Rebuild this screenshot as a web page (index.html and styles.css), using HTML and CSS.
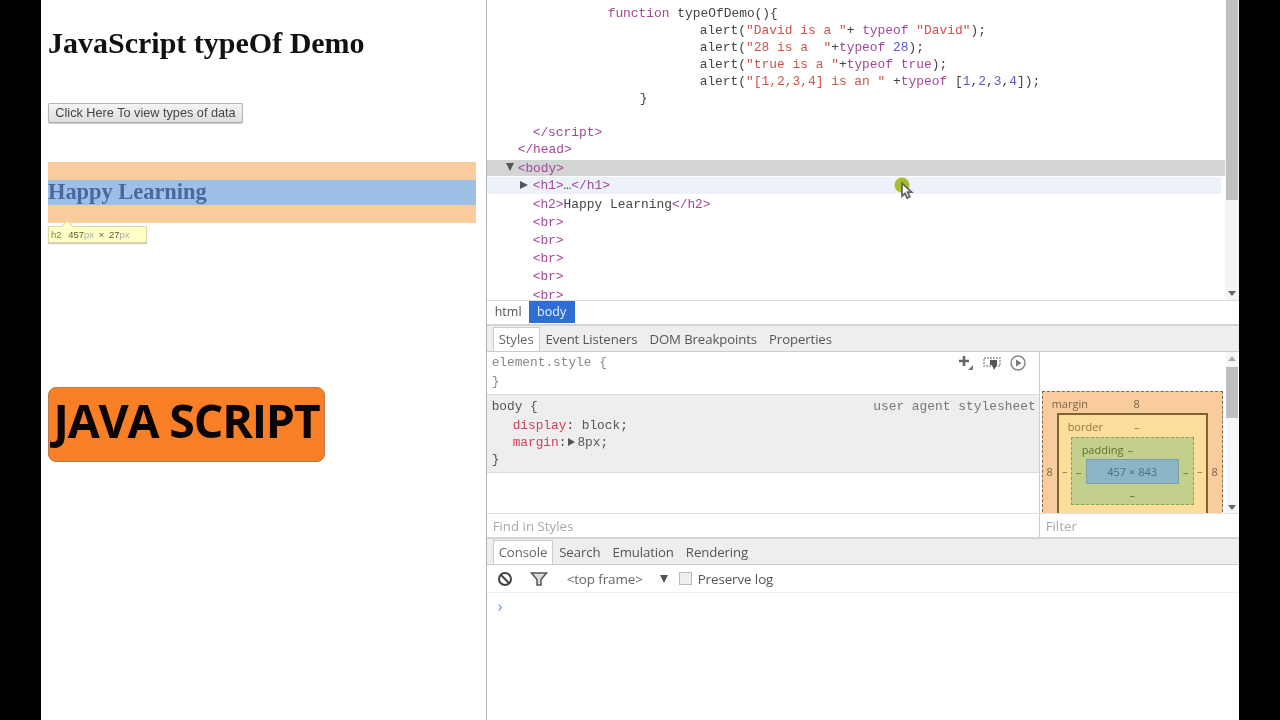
FILE: index.html
```html
<!DOCTYPE html>
<html lang="en">
<head>
    <meta charset="UTF-8" />
    <title>JavaScript typeOf Demo</title>
    <link rel="stylesheet" href="styles.css">
</head>
<body>
<div class="frame">
    <!-- page being inspected -->
    <div class="page">
        <h1>JavaScript typeOf Demo</h1>
        <button class="demo-btn">Click Here To view types of data</button>
        <div class="hl-margin">
            <div class="hl-content"><h2>Happy Learning</h2></div>
        </div>
        <div class="hl-tip"><b>h2</b> 457<i>px</i> &times; 27<i>px</i></div>
        <div class="js-badge">JAVA SCRIPT</div>
    </div>

    <!-- devtools -->
    <div class="devtools">
        <div class="tree-pane">
            <div class="tree">
                <div class="script-lines">
                    <div class="ln i-fn"><span class="kw">function</span> typeOfDemo(){</div>
                    <div class="ln i-alert">alert(<span class="str">"David is a "</span>+ <span class="kw">typeof</span> <span class="str">"David"</span>);</div>
                    <div class="ln i-alert">alert(<span class="str">"28 is a  "</span>+<span class="kw">typeof</span> <span class="num">28</span>);</div>
                    <div class="ln i-alert">alert(<span class="str">"true is a "</span>+<span class="kw">typeof</span> <span class="kw">true</span>);</div>
                    <div class="ln i-alert">alert(<span class="str">"[1,2,3,4] is an "</span> +<span class="kw">typeof</span> [<span class="num">1</span>,<span class="num">2</span>,<span class="num">3</span>,<span class="num">4</span>]);</div>
                    <div class="ln i-close">}</div>
                    <div class="ln">&nbsp;</div>
                    <div class="ln i-2"><span class="tag">&lt;/script&gt;</span></div>
                </div>
                <div class="ln2 i-1"><span class="tag">&lt;/head&gt;</span></div>
                <div class="ln2 i-1 row-body"><span class="arrow-down"></span><span class="tag">&lt;body&gt;</span></div>
                <div class="ln2 i-2 row-hover"><span class="arrow-right"></span><span class="tag">&lt;h1&gt;</span>…<span class="tag">&lt;/h1&gt;</span></div>
                <div class="ln2 i-2"><span class="tag">&lt;h2&gt;</span>Happy Learning<span class="tag">&lt;/h2&gt;</span></div>
                <div class="ln2 i-2"><span class="tag">&lt;br&gt;</span></div>
                <div class="ln2 i-2"><span class="tag">&lt;br&gt;</span></div>
                <div class="ln2 i-2"><span class="tag">&lt;br&gt;</span></div>
                <div class="ln2 i-2"><span class="tag">&lt;br&gt;</span></div>
                <div class="ln2 i-2"><span class="tag">&lt;br&gt;</span></div>
            </div>
            <div class="scrollbar">
                <div class="thumb thumb-tree"></div>
                <span class="sb-down"></span>
            </div>
            <svg class="pointer" width="30" height="30" viewBox="0 0 30 30">
                <circle cx="9" cy="8" r="7.5" fill="#a9bd2c"/>
                <path d="M9 6v13l3-2.500 2.200 4.500 2.600-1.300-2.200-4.500h4z" fill="#fff" stroke="#666" stroke-width="1.800"/>
            </svg>
        </div>

        <div class="crumbs">
            <span class="crumb">html</span>
            <span class="crumb crumb-on">body</span>
        </div>

        <div class="tabs tabs-styles">
            <span class="tab tab-on">Styles</span>
            <span class="tab">Event Listeners</span>
            <span class="tab">DOM Breakpoints</span>
            <span class="tab">Properties</span>
        </div>

        <div class="styles-area">
            <div class="styles-main">
                <div class="rule rule-el">
                    <div class="rule-head">
                        <span class="dim">element.style {</span>
                        <span class="rule-tools">
                            <svg width="18" height="18" viewBox="0 0 18 18"><path d="M7 2v10M2 7h10" stroke="#666" stroke-width="2.600"/><path d="M16 11v5h-5z" fill="#777"/></svg>
                            <svg width="18" height="18" viewBox="0 0 18 18"><rect x="1" y="4" width="16" height="8" fill="none" stroke="#999" stroke-width="1.500" stroke-dasharray="2 1"/><path d="M7 6h7v5l-3 5-2-5H7z" fill="#555"/></svg>
                            <svg width="18" height="18" viewBox="0 0 18 18"><circle cx="9" cy="9" r="7" fill="none" stroke="#888" stroke-width="1.500"/><path d="M7 5.500v7l5.500-3.500z" fill="#777"/></svg>
                        </span>
                    </div>
                    <div class="dim close-el">}</div>
                </div>
                <div class="rule rule-body">
                    <div class="rule-head">
                        <span>body {</span>
                        <span class="ua">user agent stylesheet</span>
                    </div>
                    <div class="decl decl-first"><span class="prop">display</span>: block;</div>
                    <div class="decl"><span class="prop">margin</span>:<span class="arrow-small"></span>8px;</div>
                    <div>}</div>
                </div>
            </div>
            <div class="metrics">
                <div class="bm bm-margin">
                    <div class="bm-top"><span class="bm-name">margin</span><span>8</span></div>
                    <div class="bm-mid">
                        <span class="bm-side">8</span>
                        <div class="bm bm-border">
                            <div class="bm-top"><span class="bm-name">border</span><span>–</span></div>
                            <div class="bm-mid">
                                <span class="bm-side">–</span>
                                <div class="bm bm-padding">
                                    <div class="bm-top"><span class="bm-name">padding</span><span>–</span></div>
                                    <div class="bm-mid">
                                        <span class="bm-side">–</span>
                                        <div class="bm-content">457 × 843</div>
                                        <span class="bm-side">–</span>
                                    </div>
                                    <div class="bm-bottom">–</div>
                                </div>
                                <span class="bm-side">–</span>
                            </div>
                        </div>
                        <span class="bm-side">8</span>
                    </div>
                </div>
                <div class="scrollbar scrollbar-side">
                    <span class="sb-up"></span>
                    <div class="thumb thumb-side"></div>
                    <span class="sb-down"></span>
                </div>
            </div>
        </div>

        <div class="find-row">
            <div class="find find-styles">Find in Styles</div>
            <div class="find find-filter">Filter</div>
        </div>

        <div class="tabs tabs-console">
            <span class="tab tab-on">Console</span>
            <span class="tab">Search</span>
            <span class="tab">Emulation</span>
            <span class="tab">Rendering</span>
        </div>

        <div class="console-bar">
            <svg class="ic-clear" width="16" height="16" viewBox="0 0 16 16"><circle cx="8" cy="8" r="6" fill="none" stroke="#444" stroke-width="2"/><path d="M4 4l8 8" stroke="#444" stroke-width="2"/></svg>
            <svg class="ic-filter" width="18" height="16" viewBox="0 0 18 16"><path d="M1.500 2h15L11 8.500V14H7V8.500z" fill="#ddd" stroke="#555" stroke-width="1.500"/></svg>
            <span class="frame-pick">&lt;top frame&gt;</span>
            <span class="arrow-down frame-arrow"></span>
            <span class="check"></span>
            <span>Preserve log</span>
        </div>

        <div class="console-body"><span class="prompt">›</span></div>
    </div>
</div>
</body>
</html>
```

FILE: styles.css
```css
html,body{margin:0;height:100%;background:#000;overflow:hidden;}

/* the whole capture is a soft video frame */
.frame{
    display:flex;width:1198px;height:720px;margin-left:41px;background:#fff;
    filter:blur(.6px);
}

/* ===== page ===== */
.page{
    width:445px;box-sizing:border-box;padding:0 10px 0 7px;
    font-family:"Liberation Serif",serif;color:#111;
}
h1{margin:27px 0 44px;font-size:30px;line-height:32px;font-weight:bold;white-space:nowrap;}
.demo-btn{
    display:block;width:195px;height:20px;padding:0;
    font:12.700px/18px "Liberation Sans",sans-serif;color:#444;
    background:linear-gradient(#f4f4f4,#dedede);
    border:1px solid #b5b5b5;border-bottom-color:#aaa;border-radius:2px;
    box-shadow:0 1px 1px #ccc;
    margin-bottom:39px;
}
.hl-margin{background:#f9cc9d;padding:18px 0;}
.hl-content{background:#9cc0e6;height:25px;}
h2{margin:0;font-size:22.400px;line-height:24px;font-weight:bold;color:#48699f;}
.hl-tip{
    position:relative;width:99px;height:17px;box-sizing:border-box;margin:3px 0 144px;
    background:#ffffc8;border:1px solid #d9d9a8;box-shadow:0 1px 1px #ccc;
    font:9.500px/15px "Liberation Sans",sans-serif;color:#5c5c2c;padding-left:2px;
    word-spacing:2px;white-space:nowrap;
}
.hl-tip b{font-weight:normal;color:#8a7d35;margin-right:2px;}
.hl-tip i{font-style:normal;color:#aaa;}
.hl-tip::before{
    content:"";position:absolute;left:14px;top:-5px;width:8px;height:8px;
    background:#ffffc8;border:1px solid #d9d9a8;border-right:none;border-bottom:none;
    transform:rotate(45deg);
}
.js-badge{
    width:277px;height:75px;box-sizing:border-box;
    background:#f97f26;border:1px solid #b97a45;border-radius:8px;
    font:bold 46.500px/65px "Open Sans",sans-serif;color:#0a0503;text-align:center;
    letter-spacing:-1.200px;white-space:nowrap;
}

/* ===== devtools ===== */
.devtools{
    width:753px;display:flex;flex-direction:column;
    border-left:1px solid #b4b4b4;
    font-family:"Open Sans",sans-serif;font-size:13px;color:#444;
}
.tree-pane{position:relative;display:flex;height:300px;border-bottom:1px solid #ddd;flex:none;}
.tree{flex:1;overflow:hidden;font:12.900px "Liberation Mono",monospace;color:#444;}
.script-lines{padding-top:5px;}
.ln{line-height:17px;white-space:pre;}
.ln2{line-height:18.200px;height:18.200px;white-space:pre;position:relative;}
.i-fn{padding-left:121px;}
.i-alert{padding-left:213px;}
.i-close{padding-left:153px;}
.i-1{padding-left:31px;}
.i-2{padding-left:46px;}
.kw,.tag{color:#a2479a;}
.str{color:#d0524a;}
.num{color:#5a5ac0;}
.row-body{background:#d2d5d4;height:16.500px;line-height:17.500px;margin-top:.5px;margin-bottom:1.200px;}
.row-hover{background:#edf1fa;height:17px;line-height:18px;margin-bottom:1.200px;margin-right:4px;}
.arrow-down{
    display:inline-block;width:0;height:0;margin-left:-12px;margin-right:4px;vertical-align:1px;
    border-left:4.500px solid transparent;border-right:4.500px solid transparent;border-top:8px solid #555;
}
.arrow-right{
    display:inline-block;width:0;height:0;margin-left:-13px;margin-right:5px;vertical-align:0;
    border-top:4.500px solid transparent;border-bottom:4.500px solid transparent;border-left:8px solid #555;
}
.scrollbar{position:relative;width:14px;background:#f4f4f4;flex:none;}
.thumb{background:#bfbfbf;margin:0 1px;}
.thumb-tree{height:200px;}
.sb-down,.sb-up{position:absolute;left:3px;width:0;height:0;border-left:4px solid transparent;border-right:4px solid transparent;}
.sb-down{bottom:4px;border-top:5px solid #666;}
.sb-up{top:4px;border-bottom:5px solid #aaa;}
.pointer{position:absolute;left:406px;top:177px;}

.crumbs{display:flex;height:23px;flex:none;line-height:22px;font-size:12.500px;padding-left:1px;}
.crumb{width:41px;text-align:center;color:#555;}
.crumb-on{background:#2f6fd3;color:#e8f0ff;width:46px;height:22px;}

.tabs{
    display:flex;align-items:flex-end;flex:none;box-sizing:border-box;
    background:#eee;border-top:2px solid #d4d4d4;border-bottom:1px solid #ccc;
    padding-left:6px;font-size:13.200px;letter-spacing:-.1px;color:#555;
}
.tabs-styles{height:28px;}
.tabs-console{height:28px;}
.tab{padding:0 6px;line-height:23px;}
.tab-on{background:#fff;border:1px solid #ccc;border-bottom:none;padding:0 5px;color:#666;}

.styles-area{display:flex;height:162px;flex:none;box-sizing:border-box;border-bottom:1px solid #e2e2e2;}
.styles-main{width:552px;flex:none;border-right:1px solid #ccc;font:12.800px/17px "Liberation Mono",monospace;color:#555;}
.rule{padding:2px 5px 0;}
.rule-el{height:42px;box-sizing:border-box;}
.close-el{margin-top:1px;}
.rule-body{height:79px;box-sizing:border-box;background:#eee;border-top:1px solid #ddd;border-bottom:1px solid #ddd;padding-top:3px;}
.rule-head{display:flex;justify-content:space-between;}
.rule-tools{display:flex;gap:8px;margin-right:7px;}
.dim{color:#888;}
.ua{font-size:12.900px;color:#777;margin-right:-2px;}
.decl{padding-left:21px;}
.decl-first{margin-top:2px;}
.prop{color:#d0405a;}
.arrow-small{
    display:inline-block;width:0;height:0;margin:0 2px 0 2px;
    border-top:4px solid transparent;border-bottom:4px solid transparent;border-left:7px solid #555;
}

.metrics{flex:1;display:flex;justify-content:space-between;position:relative;overflow:hidden;}
.bm{box-sizing:border-box;font-size:11px;line-height:16px;text-align:center;}
.bm-margin{
    width:181px;height:126px;margin:39px 0 0 2px;flex:none;
    background:#f9cc9d;border:1px dashed #7a6a55;color:#7d6647;
}
.bm-top{display:grid;grid-template-columns:1fr auto 1fr;}
.bm-top .bm-name{grid-column:1;text-align:left;}
.bm-top span:last-child{grid-column:2;}
.bm-margin > .bm-top{height:21px;padding:4px 0 0 9px;box-sizing:border-box;}
.bm-mid{display:flex;align-items:center;}
.bm-margin > .bm-mid{align-items:flex-start;}
.bm-margin > .bm-mid > .bm-side{width:14px;flex:none;margin-top:51px;}
.bm-border{
    flex:1;height:110px;background:#fddd9b;border:2px solid #7d6430;border-bottom:none;
    color:#8c7a40;
}
.bm-border > .bm-top{height:22px;padding:4px 0 0 9px;box-sizing:border-box;}
.bm-border > .bm-mid{align-items:flex-start;}
.bm-border > .bm-mid > .bm-side{width:12px;flex:none;margin-top:26px;}
.bm-padding{flex:1;height:68px;background:#c3d08b;border:1px dashed #8fa05a;color:#5f7030;}
.bm-padding > .bm-top{height:21px;padding:4px 0 0 10px;box-sizing:border-box;}
.bm-padding .bm-top{grid-template-columns:auto auto 1fr;column-gap:4px;}
.bm-padding .bm-side{width:14px;flex:none;}
.bm-content{
    flex:1;height:25px;line-height:23px;box-sizing:border-box;
    background:#8cb6c5;border:1px solid #7c9fa8;color:#4d6f80;
}
.bm-bottom{line-height:21px;}
.scrollbar-side{height:162px;width:12px;background:#f6f6f6;margin-right:1px;}
.thumb-side{margin:15px 0 0;height:51px;}
.scrollbar-side .sb-down{bottom:4px;left:2px;}
.scrollbar-side .sb-up{left:2px;}

.find-row{display:flex;height:23px;flex:none;color:#aaa;font-size:13.300px;line-height:24px;}
.find-styles{width:546px;padding-left:6px;border-right:1px solid #ccc;}
.find-filter{padding-left:6px;}

.console-bar{
    display:flex;align-items:center;height:28px;flex:none;box-sizing:border-box;
    border-bottom:1px solid #eee;font-size:13.400px;letter-spacing:-.1px;color:#555;
}
.ic-clear{margin-left:10px;}
.ic-filter{margin-left:17px;}
.frame-pick{margin-left:19px;width:78px;color:#666;white-space:nowrap;}
.frame-arrow{margin:0 0 0 15px;}
.check{width:11px;height:11px;margin:0 6px 0 11px;background:#eee;border:1px solid #bbb;}
.console-body{padding:3px 0 0 11px;flex:1;}
.prompt{color:#5b8fd8;font-size:16px;line-height:20px;}
```
